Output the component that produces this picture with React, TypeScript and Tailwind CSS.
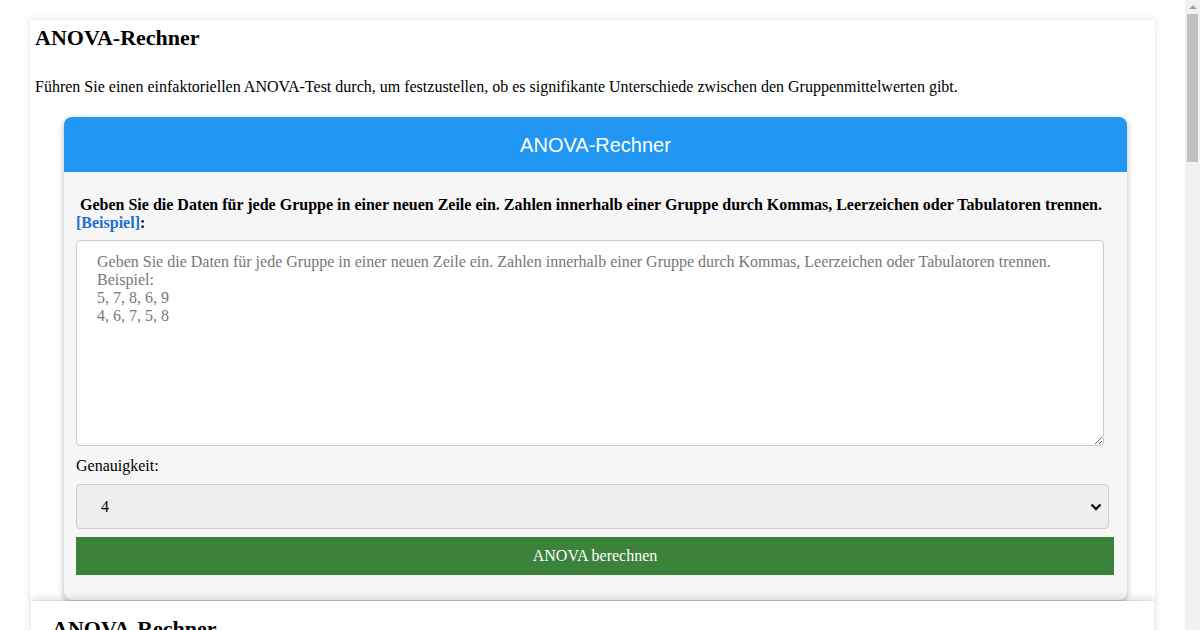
import React from "react";

const placeholder =
  "Geben Sie die Daten für jede Gruppe in einer neuen Zeile ein. Zahlen innerhalb einer Gruppe durch Kommas, Leerzeichen oder Tabulatoren trennen.\nBeispiel:\n5, 7, 8, 6, 9\n4, 6, 7, 5, 8";

function Scrollbar() {
  return (
    <div className="flex h-full w-[15px] shrink-0 flex-col items-center bg-[#f1f1f1]">
      <div className="mt-[5px] h-0 w-0 border-x-[4px] border-b-[4px] border-x-transparent border-b-[#a3a3a3]" />
      <div className="mt-[5px] h-[148px] w-[11px] bg-[#c1c1c1]" />
    </div>
  );
}

function Calculator() {
  return (
    <div className="ml-[29px] w-[1063px] rounded-[8px] bg-[#f6f6f6] shadow-[0_2px_6px_rgba(0,0,0,0.3)]">
      <div className="flex h-[55px] items-center justify-center rounded-t-[8px] bg-[#2196f3] font-['Liberation_Sans',Arial,sans-serif] text-[20px] text-white">
        ANOVA-Rechner
      </div>
      <div className="px-[12px] pt-[24px] pb-[25px]">
        <label className="block text-[16px] font-bold leading-[18px] text-black">
          <span className="pl-[4px]">
            Geben Sie die Daten für jede Gruppe in einer neuen Zeile ein. Zahlen innerhalb einer Gruppe durch Kommas, Leerzeichen oder Tabulatoren trennen.
          </span>
          <br />
          <span className="text-[#1a6fd1]">[Beispiel]</span>:
        </label>
        <textarea
          className="mt-[8px] block h-[206px] w-[1028px] resize-y rounded-[4px] border border-[#ccc] bg-white px-[20px] pt-[12px] font-['Liberation_Serif',serif] text-[16px] leading-[18px] text-black outline-none placeholder:text-[#777]"
          placeholder={placeholder}
        />
        <div className="mt-[11px] text-[16px] leading-[18px] text-black">Genauigkeit:</div>
        <div className="mt-[9px] flex h-[45px] w-[1033px] items-center justify-between rounded-[4px] border border-[#ccc] bg-[#eeeeee] pl-[24px] pr-[6px] text-[16px] text-black">
          <span>4</span>
          <svg width="12" height="8" viewBox="0 0 12 8">
            <path d="M1.5 1.5 L6 6 L10.5 1.5" fill="none" stroke="#111" strokeWidth="2.4" />
          </svg>
        </div>
        <button className="mt-[8px] flex h-[38px] w-[1038px] items-center justify-center bg-[#3b833a] text-[16px] text-white">
          ANOVA berechnen
        </button>
      </div>
    </div>
  );
}

export default function App() {
  return (
    <div className="flex h-[630px] w-[1200px] overflow-hidden bg-white font-['Liberation_Serif','Times_New_Roman',serif] text-black">
      <div className="min-w-0 flex-1">
        <div className="ml-[30px] mt-[20px] w-[1125px] bg-white px-[5px] pt-[4px] shadow-[0_0_8px_rgba(0,0,0,0.12)]">
          <h1 className="text-[22px] font-bold leading-[28px]">ANOVA-Rechner</h1>
          <p className="mt-[26px] text-[16px] leading-[18px]">
            Führen Sie einen einfaktoriellen ANOVA-Test durch, um festzustellen, ob es signifikante Unterschiede zwischen den Gruppenmittelwerten gibt.
          </p>
          <div className="mt-[21px]">
            <Calculator />
          </div>
        </div>
        <div className="ml-[31px] mt-[1px] w-[1123px] bg-white px-[21px] pt-[14px] shadow-[0_-2px_8px_rgba(0,0,0,0.15)]">
          <h2 className="text-[22px] font-bold leading-[28px]">ANOVA-Rechner</h2>
        </div>
      </div>
      <Scrollbar />
    </div>
  );
}
